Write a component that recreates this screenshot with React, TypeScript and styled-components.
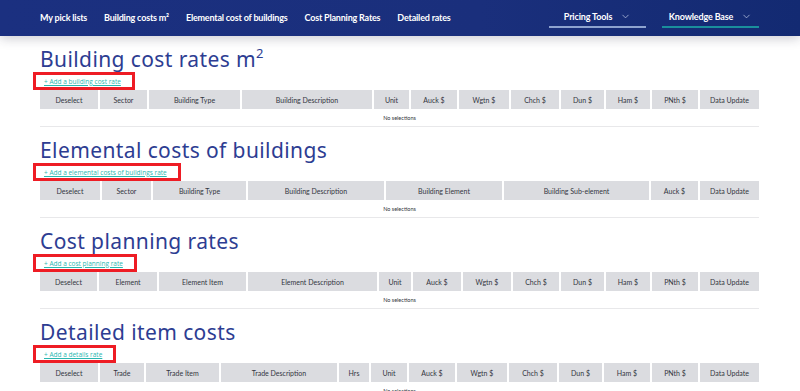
import { FunctionComponent } from 'react'
import styled, { createGlobalStyle } from 'styled-components'
import { ChevronDown } from 'lucide-react'

const GlobalStyle = createGlobalStyle`
  html, body {
    margin: 0;
    padding: 0;
    background: #ffffff;
    font-family: 'Lato', 'Open Sans', sans-serif;
  }
`

type Column = { label: string; width: number }

type Section = {
  title: string
  sup?: string
  link: string
  columns: Column[]
}

const priceCols = (unit: number, auck: number, wgtn: number, chch: number, ham: number): Column[] => [
  { label: 'Unit', width: unit },
  { label: 'Auck $', width: auck },
  { label: 'Wgtn $', width: wgtn },
  { label: 'Chch $', width: chch },
  { label: 'Dun $', width: 45 },
  { label: 'Ham $', width: ham },
  { label: 'PNth $', width: 48 },
  { label: 'Data Update', width: 59 }
]

const sections: Section[] = [
  {
    title: 'Building cost rates m',
    sup: '2',
    link: '+ Add a building cost rate',
    columns: [
      { label: 'Deselect', width: 60 },
      { label: 'Sector', width: 49 },
      { label: 'Building Type', width: 93 },
      { label: 'Building Description', width: 132 },
      ...priceCols(37, 48, 52, 50, 46)
    ]
  },
  {
    title: 'Elemental costs of buildings',
    link: '+ Add a elemental costs of buildings rate',
    columns: [
      { label: 'Deselect', width: 62 },
      { label: 'Sector', width: 51 },
      { label: 'Building Type', width: 95 },
      { label: 'Building Description', width: 138 },
      { label: 'Building Element', width: 118 },
      { label: 'Building Sub-element', width: 147 },
      { label: 'Auck $', width: 49 },
      { label: 'Data Update', width: 59 }
    ]
  },
  {
    title: 'Cost planning rates',
    link: '+ Add a cost planning rate',
    columns: [
      { label: 'Deselect', width: 59 },
      { label: 'Element', width: 60 },
      { label: 'Element Item', width: 89 },
      { label: 'Element Description', width: 131 },
      ...priceCols(34, 50, 50, 48, 46)
    ]
  },
  {
    title: 'Detailed item costs',
    link: '+ Add a details rate',
    columns: [
      { label: 'Deselect', width: 60 },
      { label: 'Trade', width: 46 },
      { label: 'Trade Item', width: 75 },
      { label: 'Trade Description', width: 118 },
      { label: 'Hrs', width: 32 },
      ...priceCols(38, 48, 52, 50, 48)
    ]
  }
]

const navLinks = [
  'My pick lists',
  'Building costs m²',
  'Elemental cost of buildings',
  'Cost Planning Rates',
  'Detailed rates'
]

const App: FunctionComponent = () => {
  return (
    <>
      <GlobalStyle />
      <Page>
        <NavBar>
          <NavLinks>
            {navLinks.map(l => (
              <NavLink key={l}>{l}</NavLink>
            ))}
          </NavLinks>
          <Dropdowns>
            <Dropdown $line='#8ea3cf'>
              Pricing Tools <ChevronDown size={11} strokeWidth={1.5} />
            </Dropdown>
            <Dropdown $line='#1a8f9c'>
              Knowledge Base <ChevronDown size={11} strokeWidth={1.5} />
            </Dropdown>
          </Dropdowns>
        </NavBar>
        <Content>
          {sections.map(s => (
            <Block key={s.title}>
              <Title>
                {s.title}
                {s.sup && <sup>{s.sup}</sup>}
              </Title>
              <LinkBox>
                <AddLink href='#'>{s.link}</AddLink>
              </LinkBox>
              <Table>
                <HeaderRow>
                  {s.columns.map(c => (
                    <HeaderCell key={c.label} style={{ width: c.width }}>
                      {c.label}
                    </HeaderCell>
                  ))}
                </HeaderRow>
                <EmptyRow>No selections</EmptyRow>
              </Table>
            </Block>
          ))}
        </Content>
      </Page>
    </>
  )
}

const Page = styled.div`
  width: 800px;
  height: 391px;
  overflow: hidden;
  background: #ffffff;
`

const NavBar = styled.nav`
  height: 36px;
  display: flex;
  align-items: center;
  justify-content: space-between;
  padding: 0 41px 0 40px;
  background: linear-gradient(90deg, #1b3080 0%, #1a2f7c 60%, #132a72 100%);
  box-shadow: 0 3px 10px rgba(40, 40, 70, 0.22);
  position: relative;
  z-index: 1;
`

const NavLinks = styled.div`
  display: flex;
  gap: 17px;
  padding-bottom: 2px;
`

const NavLink = styled.span`
  color: #ffffff;
  font-size: 9px;
  font-weight: 700;
  letter-spacing: -0.2px;
  white-space: nowrap;
`

const Dropdowns = styled.div`
  display: flex;
  gap: 16px;
  align-self: flex-start;
  padding-top: 9px;
`

const Dropdown = styled.div<{ $line: string }>`
  width: 97px;
  height: 15px;
  display: flex;
  align-items: center;
  justify-content: center;
  gap: 8px;
  color: #ffffff;
  font-size: 9px;
  font-weight: 700;
  letter-spacing: -0.15px;
  border-bottom: 2px solid ${p => p.$line};
  padding-bottom: 2px;

  svg {
    color: #c9d3ec;
  }
`

const Content = styled.main`
  padding: 10px 41px 0 40px;
  display: flex;
  flex-direction: column;
  gap: 10px;
`

const Block = styled.section`
  display: flex;
  flex-direction: column;
`

const Title = styled.h2`
  margin: 0;
  height: 26px;
  line-height: 26px;
  font-family: 'Noto Sans', sans-serif;
  font-weight: 400;
  font-size: 21px;
  letter-spacing: 0.4px;
  color: #2d3d92;

  sup {
    font-size: 13px;
    line-height: 0;
    vertical-align: 9px;
  }
`

const LinkBox = styled.div`
  align-self: flex-start;
  margin-left: -7px;
  height: 18px;
  box-sizing: border-box;
  border: 3px solid #ee1c24;
  padding: 0 11px 0 8px;
  display: flex;
  align-items: center;
`

const AddLink = styled.a`
  font-family: 'Open Sans', sans-serif;
  font-size: 6.5px;
  color: #2ab7b0;
  text-decoration: underline;
  white-space: nowrap;
`

const Table = styled.div`
  display: flex;
  flex-direction: column;
`

const HeaderRow = styled.div`
  display: flex;
  height: 19px;
`

const HeaderCell = styled.div`
  box-sizing: border-box;
  background: #dbdce0;
  border-right: 2px solid #ffffff;
  display: flex;
  align-items: center;
  justify-content: center;
  font-size: 7px;
  color: #333640;
  white-space: nowrap;

  &:last-child {
    border-right: none;
  }
`

const EmptyRow = styled.div`
  height: 18px;
  box-sizing: border-box;
  border-bottom: 1px solid #e8e8ea;
  display: flex;
  align-items: center;
  justify-content: center;
  font-size: 5.5px;
  color: #333640;
`

export default App
